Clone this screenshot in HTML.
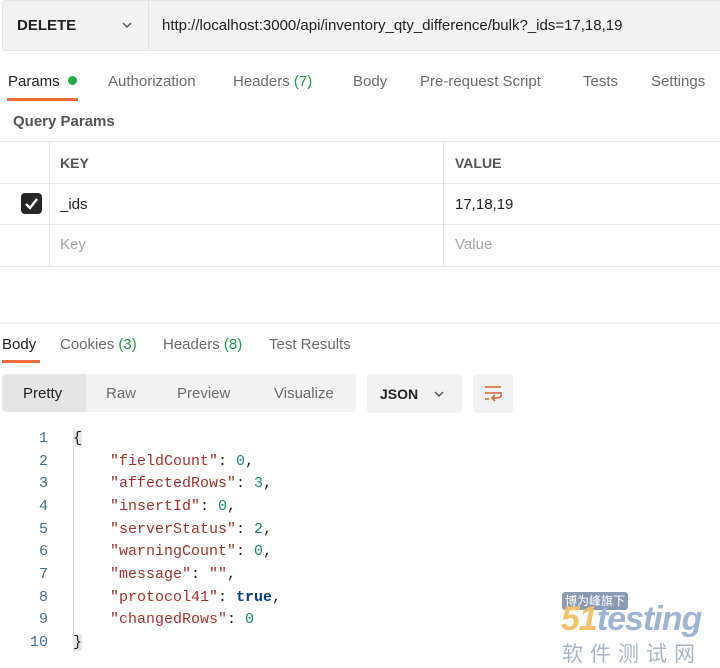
<!DOCTYPE html>
<html><head><meta charset="utf-8"><style>
body{margin:0;width:720px;height:667px;background:#fff;font-family:"Liberation Sans",sans-serif;position:relative;overflow:hidden;color:#212121}
.a{position:absolute;white-space:nowrap}
.code{font-family:"Liberation Mono",monospace;font-size:15px}
.k{color:#a5312c}.n{color:#148a74}.t{color:#0b3c8c;font-weight:bold}
.ln{position:absolute;width:48px;text-align:right;color:#3f6f93;font-family:"Liberation Mono",monospace;font-size:15px}
</style></head><body>
<div class="a" style="left:2px;top:0;width:730px;height:49px;background:#f2f2f2;border:1px solid #e6e6e6;border-radius:3px"></div>
<div class="a" style="left:148px;top:1px;width:1px;height:48px;background:#e0e0e0"></div>
<div class="a" style="left:17px;top:17px;font-size:15px;font-weight:bold">DELETE</div>
<svg class="a" style="left:121px;top:20px" width="12" height="10"><path d="M2 3 L6 7 L10 3" stroke="#555" stroke-width="1.4" fill="none"/></svg>
<div class="a" style="left:162px;top:17px;font-size:15px">http://localhost:3000/api/inventory_qty_difference/bulk?_ids=17,18,19</div>

<div class="a" style="left:8px;top:73px;font-size:15px">Params</div>
<div class="a" style="left:68px;top:76px;width:9px;height:9px;border-radius:50%;background:#1fae4b"></div>
<div class="a" style="left:7px;top:98px;width:71px;height:3px;background:#f26b3a"></div>
<div class="a" style="left:108px;top:73px;font-size:15px;color:#6b6b6b">Authorization</div>
<div class="a" style="left:233px;top:73px;font-size:15px;color:#6b6b6b">Headers <span style="color:#1a9a46">(7)</span></div>
<div class="a" style="left:353px;top:73px;font-size:15px;color:#6b6b6b">Body</div>
<div class="a" style="left:420px;top:73px;font-size:15px;color:#6b6b6b">Pre-request Script</div>
<div class="a" style="left:583px;top:73px;font-size:15px;color:#6b6b6b">Tests</div>
<div class="a" style="left:651px;top:73px;font-size:15px;color:#6b6b6b">Settings</div>
<div class="a" style="left:13px;top:113px;font-size:15px;font-weight:bold;color:#555">Query Params</div>

<div class="a" style="left:0;top:141px;width:720px;height:1px;background:#e6e6e6"></div>
<div class="a" style="left:0;top:183px;width:720px;height:1px;background:#e6e6e6"></div>
<div class="a" style="left:0;top:224px;width:720px;height:1px;background:#e6e6e6"></div>
<div class="a" style="left:0;top:266px;width:720px;height:1px;background:#e6e6e6"></div>
<div class="a" style="left:49px;top:141px;width:1px;height:125px;background:#e6e6e6"></div>
<div class="a" style="left:443px;top:141px;width:1px;height:125px;background:#e6e6e6"></div>
<div class="a" style="left:60px;top:155px;font-size:14px;font-weight:bold;color:#555">KEY</div>
<div class="a" style="left:455px;top:155px;font-size:14px;font-weight:bold;color:#555">VALUE</div>
<div class="a" style="left:21px;top:193px;width:21px;height:21px;border-radius:4px;background:#262626"></div>
<svg class="a" style="left:21px;top:193px" width="21" height="21"><path d="M5 11 L9 15 L16 6" stroke="#fff" stroke-width="2.4" fill="none"/></svg>
<div class="a" style="left:60px;top:196px;font-size:15px">_ids</div>
<div class="a" style="left:455px;top:196px;font-size:15px">17,18,19</div>
<div class="a" style="left:60px;top:236px;font-size:15px;color:#a6a6a6">Key</div>
<div class="a" style="left:455px;top:236px;font-size:15px;color:#a6a6a6">Value</div>

<div class="a" style="left:0;top:322px;width:720px;height:2px;background:#f0f0f0"></div>
<div class="a" style="left:2px;top:336px;font-size:15px">Body</div>
<div class="a" style="left:2px;top:360px;width:38px;height:3px;background:#f26b3a"></div>
<div class="a" style="left:60px;top:336px;font-size:15px;color:#6b6b6b">Cookies <span style="color:#1a9a46">(3)</span></div>
<div class="a" style="left:163px;top:336px;font-size:15px;color:#6b6b6b">Headers <span style="color:#1a9a46">(8)</span></div>
<div class="a" style="left:269px;top:336px;font-size:15px;color:#6b6b6b">Test Results</div>

<div class="a" style="left:2px;top:374px;width:354px;height:38px;background:#f2f2f2;border-radius:4px"></div>
<div class="a" style="left:2px;top:374px;width:84px;height:38px;background:#e5e5e5;border-radius:4px 0 0 4px"></div>
<div class="a" style="left:23px;top:385px;font-size:15px">Pretty</div>
<div class="a" style="left:106px;top:385px;font-size:15px;color:#6b6b6b">Raw</div>
<div class="a" style="left:177px;top:385px;font-size:15px;color:#6b6b6b">Preview</div>
<div class="a" style="left:274px;top:385px;font-size:15px;color:#6b6b6b">Visualize</div>
<div class="a" style="left:367px;top:374px;width:95px;height:39px;background:#f2f2f2;border-radius:4px"></div>
<div class="a" style="left:380px;top:386px;font-size:14px;font-weight:bold">JSON</div>
<svg class="a" style="left:433px;top:389px" width="12" height="10"><path d="M2 3 L6 7 L10 3" stroke="#555" stroke-width="1.4" fill="none"/></svg>
<div class="a" style="left:473px;top:374px;width:40px;height:39px;background:#f2f2f2;border-radius:4px"></div>
<svg class="a" style="left:482px;top:383px" width="22" height="22"><path d="M3 4 H19 M3 10 H19 Q20 15 15 15 H11 M13 12 L10 15 L13 18 M3 16 H7" stroke="#e0622f" stroke-width="1.5" fill="none"/></svg>

<div class="a" style="left:73px;top:428px;width:1px;height:224px;background:#d8d8d8"></div>
<div class="ln" style="left:0;top:430px">1</div>
<div class="ln" style="left:0;top:453px">2</div>
<div class="ln" style="left:0;top:475px">3</div>
<div class="ln" style="left:0;top:498px">4</div>
<div class="ln" style="left:0;top:521px">5</div>
<div class="ln" style="left:0;top:543px">6</div>
<div class="ln" style="left:0;top:566px">7</div>
<div class="ln" style="left:0;top:589px">8</div>
<div class="ln" style="left:0;top:611px">9</div>
<div class="ln" style="left:0;top:634px">10</div>
<div class="a code" style="left:73px;top:430px;background:#e8e8e8">{</div>
<div class="a code" style="left:110px;top:453px"><span class="k">"fieldCount"</span>: <span class="n">0</span>,</div>
<div class="a code" style="left:110px;top:475px"><span class="k">"affectedRows"</span>: <span class="n">3</span>,</div>
<div class="a code" style="left:110px;top:498px"><span class="k">"insertId"</span>: <span class="n">0</span>,</div>
<div class="a code" style="left:110px;top:521px"><span class="k">"serverStatus"</span>: <span class="n">2</span>,</div>
<div class="a code" style="left:110px;top:543px"><span class="k">"warningCount"</span>: <span class="n">0</span>,</div>
<div class="a code" style="left:110px;top:566px"><span class="k">"message"</span>: <span class="k">""</span>,</div>
<div class="a code" style="left:110px;top:589px"><span class="k">"protocol41"</span>: <span class="t">true</span>,</div>
<div class="a code" style="left:110px;top:611px"><span class="k">"changedRows"</span>: <span class="n">0</span></div>
<div class="a code" style="left:73px;top:634px;background:#e8e8e8">}</div>

<div class="a" style="left:562px;top:592px;width:66px;height:18px;background:#8a9bb3;border-radius:3px;color:#fff;font-size:12px;font-family:'Noto Sans CJK SC',sans-serif;text-align:center;line-height:18px">博为峰旗下</div>
<div class="a" style="left:561px;top:600px;font-size:34px;font-weight:bold;font-style:italic;color:#9fb4d4;letter-spacing:-1px"><span style="color:#f2c36b">51</span>testing</div>
<div class="a" style="left:562px;top:638px;font-size:21px;color:#a9b6c9;letter-spacing:7px;font-family:'Noto Sans CJK SC',sans-serif">软件测试网</div>
</body></html>
